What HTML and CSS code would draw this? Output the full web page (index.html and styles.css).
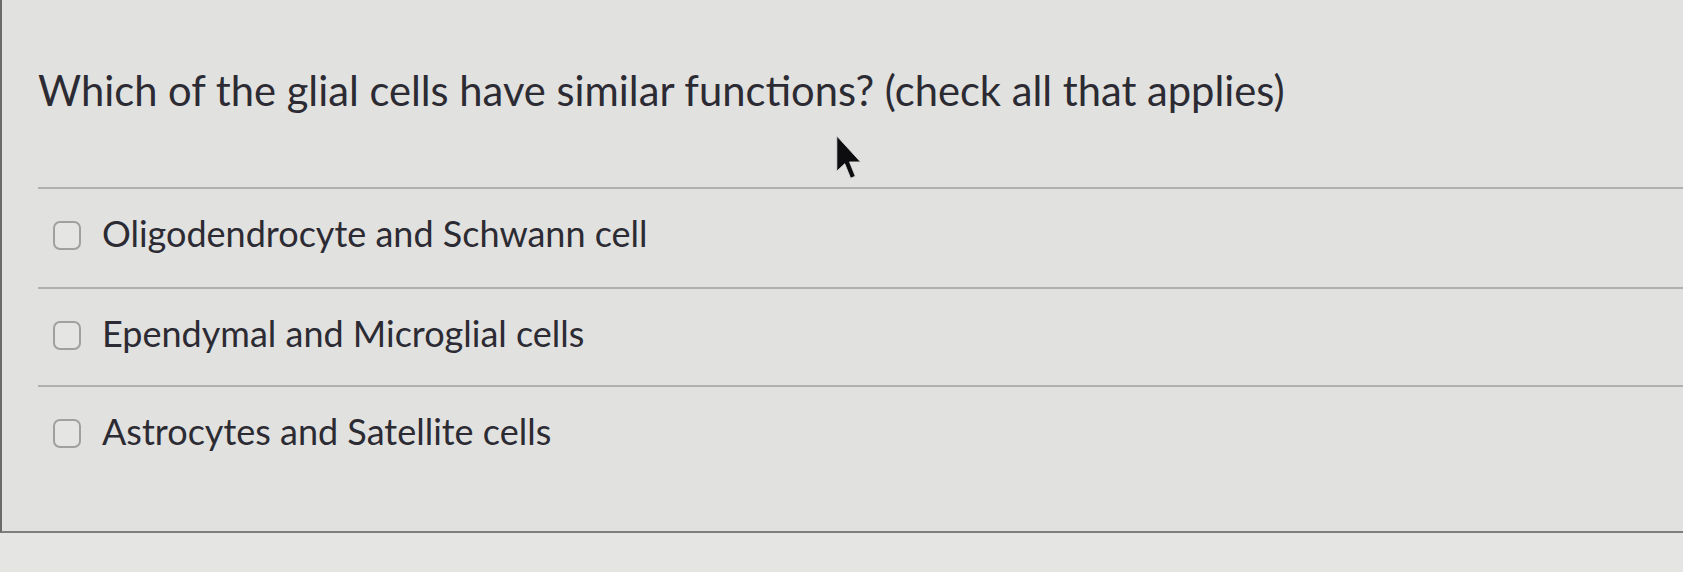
FILE: index.html
```html
<!DOCTYPE html>
<html lang="en">
<head>
  <meta charset="UTF-8" />
  <meta name="viewport" content="width=device-width, initial-scale=1.0" />
  <title>Quiz question</title>
  <link rel="stylesheet" href="styles.css">
</head>
<body>
  <div class="page">
    <h1 class="question">Which of the glial cells have similar functions? (check all that applies)</h1>

    <div class="options">
      <label class="option">
        <span class="box"></span>
        <span class="text">Oligodendrocyte and Schwann cell</span>
      </label>
      <label class="option">
        <span class="box"></span>
        <span class="text">Ependymal and Microglial cells</span>
      </label>
      <label class="option">
        <span class="box"></span>
        <span class="text">Astrocytes and Satellite cells</span>
      </label>
    </div>

    <!-- mouse pointer over the page -->
    <svg class="cursor" width="28" height="44" viewBox="0 0 12 20">
      <path d="M0 0 L0 16 L3.6 12.6 L6.3 19.2 L8.4 18.3 L5.8 11.8 L10.8 11.8 Z" fill="#0d0d10" stroke="#dcdcdc" stroke-width="0.4"/>
    </svg>
  </div>
</body>
</html>
```

FILE: styles.css
```css
body {
  margin: 0;
  font-family: 'Lato', 'Open Sans', sans-serif;
  background: #e5e5e3;
  color: #2c2b33;
}
.page {
  position: relative;
  box-sizing: border-box;
  height: 533px;
  padding: 65px 0 0 36px;
  background: #e1e1df;
  border-left: 2px solid #6a6a6a;
  border-bottom: 2px solid #7e7e7e;
}
.question {
  margin: 0;
  font-size: 41.7px;
  font-weight: normal;
  line-height: 50px;
  color: #2c2b33;
}
.options {
  margin-top: 72px;
}
.option {
  display: flex;
  align-items: flex-start;
  box-sizing: border-box;
  height: 98px;
  padding-top: 24px;
  border-top: 2px solid #b0b0ae;
}
.option:first-child {
  height: 100px;
}
.box {
  box-sizing: border-box;
  width: 28px;
  height: 29px;
  margin: 8px 21px 0 15px;
  border: 2px solid #a0a0a0;
  border-radius: 7px;
  background: #e5e5e3;
}
.text {
  font-size: 36px;
  line-height: 40px;
}
.cursor {
  position: absolute;
  left: 834px;
  top: 136px;
}
```
